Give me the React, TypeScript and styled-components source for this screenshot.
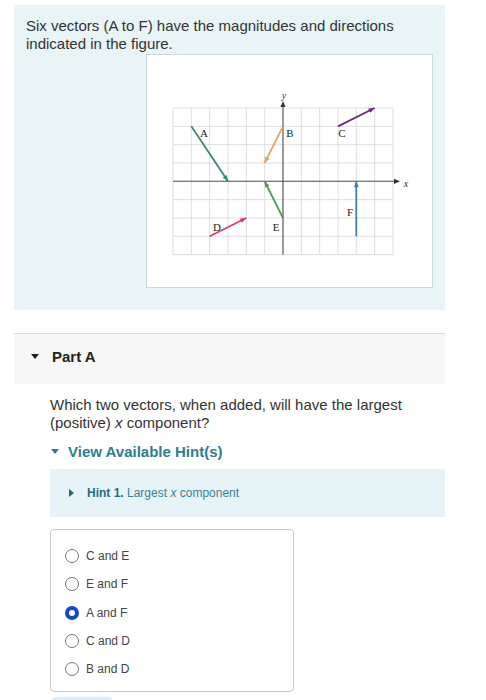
import React from "react";
import styled, { createGlobalStyle } from "styled-components";

const GlobalStyle = createGlobalStyle`
  html, body {
    margin: 0;
    padding: 0;
    background: #ffffff;
  }
  body {
    font-family: "Liberation Sans", Arial, Helvetica, sans-serif;
    color: #333;
    overflow: hidden;
  }
`;

const U = 18.33;
const OX = 26 + 6 * U;
const OY = 53 + 4 * U;

const px = (x: number) => OX + x * U;
const py = (y: number) => OY - y * U;

interface Vec {
  name: string;
  from: [number, number];
  to: [number, number];
  color: string;
  label: [number, number];
}

const vectors: Vec[] = [
  { name: "A", from: [-5, 3], to: [-3, 0], color: "#3b8878", label: [57, 78] },
  { name: "B", from: [0, 3], to: [-1, 1], color: "#eba060", label: [143, 78] },
  { name: "C", from: [3, 3], to: [5, 4], color: "#6b2a86", label: [195, 78] },
  { name: "D", from: [-4, -3], to: [-2, -2], color: "#d4406a", label: [70, 172] },
  { name: "E", from: [0, -2], to: [-1, 0], color: "#4e9a4c", label: [129, 172] },
  { name: "F", from: [4, -3], to: [4, 0], color: "#3e80a8", label: [203, 157] },
];

const arrowHead = (x1: number, y1: number, x2: number, y2: number, len = 6, half = 2.4) => {
  const dx = x2 - x1;
  const dy = y2 - y1;
  const d = Math.hypot(dx, dy);
  const ux = dx / d;
  const uy = dy / d;
  const bx = x2 - ux * len;
  const by = y2 - uy * len;
  return `${x2},${y2} ${bx - uy * half},${by + ux * half} ${bx + uy * half},${by - ux * half}`;
};

const VectorFigure = () => {
  const cols = Array.from({ length: 13 }, (_, i) => 26 + i * U);
  const rows = Array.from({ length: 9 }, (_, i) => 53 + i * U);
  const gridRight = 26 + 12 * U;
  const gridBottom = 53 + 8 * U;
  return (
    <svg width="285" height="232" viewBox="0 0 285 232">
      {cols.map((x, i) => (
        <line key={`c${i}`} x1={x} y1={53} x2={x} y2={gridBottom} stroke="#d6d6d6" strokeWidth="0.8" />
      ))}
      {rows.map((y, i) => (
        <line key={`r${i}`} x1={26} y1={y} x2={gridRight} y2={y} stroke="#d6d6d6" strokeWidth="0.8" />
      ))}
      <line x1={26} y1={OY} x2={249} y2={OY} stroke="#555" strokeWidth="1.1" />
      <polygon points={arrowHead(240, OY, 253, OY, 6, 2.6)} fill="#333" />
      <line x1={OX} y1={gridBottom} x2={OX} y2={51} stroke="#555" strokeWidth="1.1" />
      <polygon points={arrowHead(OX, 60, OX, 46, 6, 2.6)} fill="#333" />
      <AxisLabel x={OX + 1} y={40}>y</AxisLabel>
      <AxisLabel x={259} y={128}>x</AxisLabel>
      {vectors.map((v) => {
        const x1 = px(v.from[0]);
        const y1 = py(v.from[1]);
        const x2 = px(v.to[0]);
        const y2 = py(v.to[1]);
        return (
          <g key={v.name}>
            <line x1={x1} y1={y1} x2={x2} y2={y2} stroke={v.color} strokeWidth="1.8" />
            <polygon points={arrowHead(x1, y1, x2, y2)} fill={v.color} />
            <VecLabel x={v.label[0]} y={v.label[1]}>
              {v.name}
            </VecLabel>
          </g>
        );
      })}
    </svg>
  );
};

const AxisLabel = styled.text`
  font-family: "Liberation Serif", "Times New Roman", serif;
  font-style: italic;
  font-size: 10px;
  fill: #333;
  text-anchor: middle;
  dominant-baseline: central;
`;

const VecLabel = styled.text`
  font-family: "Liberation Serif", "Times New Roman", serif;
  font-size: 11px;
  fill: #222;
  text-anchor: middle;
  dominant-baseline: central;
`;

const options = ["C and E", "E and F", "A and F", "C and D", "B and D"];

export default function App() {
  return (
    <>
      <GlobalStyle />
      <Page>
        <IntroPanel>
          <IntroText>
            Six vectors (A to F) have the magnitudes and directions indicated in the figure.
          </IntroText>
          <FigureBox>
            <VectorFigure />
          </FigureBox>
        </IntroPanel>

        <PartHeader>
          <Caret />
          <PartTitle>Part A</PartTitle>
        </PartHeader>

        <PartBody>
          <Question>
            Which two vectors, when added, will have the largest (positive) <em>x</em>&nbsp;component?
          </Question>
          <HintToggle>
            <Caret $color="#2f7c90" $gap={9} />
            <span>View Available Hint(s)</span>
          </HintToggle>
          <HintBox>
            <SideCaret />
            <HintText>
              <strong>Hint 1.</strong> Largest <em>x</em>&nbsp;component
            </HintText>
          </HintBox>
          <AnswerBox>
            {options.map((o, i) => (
              <Option key={o}>
                <Radio $checked={i === 2} />
                <OptionText>{o}</OptionText>
              </Option>
            ))}
          </AnswerBox>
          <SubmitButton aria-label="Submit" />
        </PartBody>
      </Page>
    </>
  );
}

const Page = styled.div`
  width: 431px;
  margin-left: 14px;
  padding-top: 5px;
`;

const IntroPanel = styled.section`
  background: #e8f4f6;
  padding: 12px 12px 22px 12px;
  display: flex;
  flex-direction: column;
`;

const IntroText = styled.p`
  margin: 0;
  font-size: 15px;
  line-height: 18px;
  color: #333;
  max-width: 390px;
`;

const FigureBox = styled.div`
  align-self: flex-end;
  width: 285px;
  height: 232px;
  margin-top: 1px;
  background: #ffffff;
  border: 1px solid #cdd9dd;
`;

const PartHeader = styled.div`
  margin-top: 23px;
  height: 51px;
  background: #f7f7f7;
  border-top: 1px solid #dcdcdc;
  display: flex;
  align-items: center;
  padding-left: 17px;
  padding-bottom: 6px;
  box-sizing: border-box;
`;

const Caret = styled.span<{ $color?: string; $gap?: number }>`
  width: 0;
  height: 0;
  border-left: 4px solid transparent;
  border-right: 4px solid transparent;
  border-top: 5px solid ${(p) => p.$color || "#222"};
  margin-right: ${(p) => p.$gap ?? 13}px;
  flex-shrink: 0;
`;

const SideCaret = styled.span`
  width: 0;
  height: 0;
  border-top: 4px solid transparent;
  border-bottom: 4px solid transparent;
  border-left: 5px solid #2f5f70;
  margin-right: 13px;
`;

const PartTitle = styled.h2`
  margin: 0;
  font-size: 15px;
  font-weight: bold;
  color: #222;
`;

const PartBody = styled.div`
  padding-left: 36px;
  padding-top: 12px;
`;

const Question = styled.p`
  margin: 0;
  font-size: 15px;
  line-height: 18px;
  color: #333;
  max-width: 380px;

  em {
    font-style: italic;
  }
`;

const HintToggle = styled.div`
  display: flex;
  align-items: center;
  margin-top: 9px;
  margin-left: 1px;
  font-size: 15px;
  font-weight: bold;
  color: #2f7c90;
  height: 20px;
`;

const HintBox = styled.div`
  margin-top: 8px;
  height: 48px;
  background: #e6f4f8;
  display: flex;
  align-items: center;
  padding-left: 19px;
`;

const HintText = styled.span`
  font-size: 12px;
  color: #3d7f93;

  strong {
    color: #2a6c80;
  }
`;

const AnswerBox = styled.div`
  margin-top: 12px;
  width: 244px;
  height: 163px;
  border: 1px solid #c8c8c8;
  border-radius: 4px;
  box-sizing: border-box;
  padding-top: 12px;
  padding-left: 14px;
  display: flex;
  flex-direction: column;
`;

const Option = styled.label`
  display: flex;
  align-items: center;
  height: 28.3px;
`;

const Radio = styled.span<{ $checked?: boolean }>`
  width: 14px;
  height: 14px;
  border-radius: 50%;
  box-sizing: border-box;
  border: ${(p) => (p.$checked ? "4px solid #1847c4" : "1.5px solid #777")};
  background: #fff;
  margin-right: 7px;
`;

const OptionText = styled.span`
  font-size: 12px;
  color: #444;
`;

const SubmitButton = styled.button`
  display: block;
  margin-top: 5px;
  margin-left: 2px;
  width: 60px;
  height: 30px;
  border: none;
  border-radius: 3px;
  background: #dcebf5;
`;
